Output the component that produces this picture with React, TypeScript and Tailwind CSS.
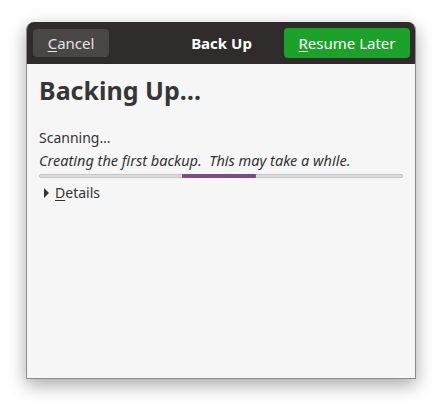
import React from 'react';

const App = () => {
    return (
        <div className="h-[407px] w-[442px] bg-white pt-[22px] pl-[26px]" style={{ fontFamily: '"Noto Sans", "Open Sans", sans-serif' }}>
            <div className="flex h-[357px] w-[390px] flex-col overflow-hidden rounded-t-[8px] border-x border-b border-[#8c8c8c] bg-[#f6f6f6] shadow-[0_6px_18px_rgba(0,0,0,0.35)]">
                <div className="flex h-[42px] shrink-0 items-center bg-[#2f2c2b] pl-[6px] pr-[5px]">
                    <div className="flex flex-1">
                        <button className="h-[28px] w-[76px] rounded-[4px] bg-[#4a4645] text-[15px] text-[#e6e3e0]">
                            <span className="underline underline-offset-2">C</span>ancel
                        </button>
                    </div>
                    <div className="text-[15px] font-bold text-white">Back Up</div>
                    <div className="flex flex-1 justify-end">
                        <button className="h-[30px] w-[126px] rounded-[4px] bg-[#1ca22b] text-[15px] text-white">
                            <span className="underline underline-offset-2">R</span>esume Later
                        </button>
                    </div>
                </div>
                <div className="flex flex-col px-[12px] pt-[10px]">
                    <div className="text-[25px] font-bold leading-[32px] text-[#363636]">Backing Up…</div>
                    <div className="mt-[21px] text-[14px] leading-[22px] text-[#333333]">Scanning…</div>
                    <div className="text-[14.5px] italic leading-[22px] text-[#333333]">Creating the first backup.&nbsp; This may take a while.</div>
                    <div className="relative mt-[3px] h-[4px] rounded-full border border-[#c4c4c4] bg-[#dcdcdc]">
                        <div className="absolute -top-px left-[142px] h-[4px] w-[74px] rounded-[1px] bg-[#7c4d84]" />
                    </div>
                    <div className="mt-[4px] flex items-center gap-[5px] pl-[5px] text-[14px] text-[#333333]">
                        <svg width="6" height="10" viewBox="0 0 6 10"><path d="M0 0 L5 5 L0 10 Z" fill="#333333" /></svg>
                        <span><span className="underline underline-offset-2">D</span>etails</span>
                    </div>
                </div>
            </div>
        </div>
    );
};

export default App;
